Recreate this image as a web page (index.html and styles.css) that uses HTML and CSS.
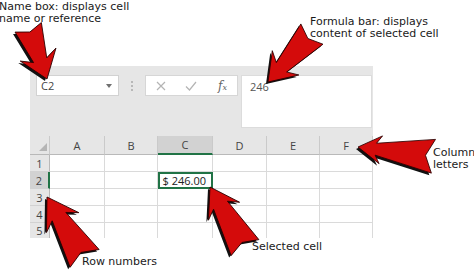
FILE: index.html
```html
<!DOCTYPE html>
<html>
<head>
<meta charset="utf-8">
<link rel="stylesheet" href="styles.css">
</head>
<body>
<div class="excel">
  <div class="toolbar">
    <div class="namebox"><span>C2</span><span class="caret"></span></div>
    <div class="sep"><i></i><i></i><i></i></div>
    <div class="fbtns">
      <span class="btn"><svg width="10" height="10" viewBox="0 0 10 10"><path d="M1 1L9 9M9 1L1 9" stroke="#b4b4b4" stroke-width="1.2" fill="none"/></svg></span>
      <span class="btn"><svg width="12" height="10" viewBox="0 0 12 10"><path d="M1 5.5L4.5 9L11 1" stroke="#b4b4b4" stroke-width="1.2" fill="none"/></svg></span>
      <span class="btn fx">f<span class="sub">x</span></span>
    </div>
    <div class="fbar">246</div>
  </div>
  <div class="grid">
    <div class="ch corner"><span class="tri"></span></div>
    <div class="ch">A</div><div class="ch">B</div><div class="ch on">C</div><div class="ch">D</div><div class="ch">E</div><div class="ch">F</div>

    <div class="rh">1</div>
    <div class="c"></div><div class="c"></div><div class="c"></div><div class="c"></div><div class="c"></div><div class="c"></div>

    <div class="rh on">2</div>
    <div class="c"></div><div class="c"></div><div class="c sel">$ 246.00</div><div class="c"></div><div class="c"></div><div class="c"></div>

    <div class="rh">3</div>
    <div class="c"></div><div class="c"></div><div class="c"></div><div class="c"></div><div class="c"></div><div class="c"></div>

    <div class="rh">4</div>
    <div class="c"></div><div class="c"></div><div class="c"></div><div class="c"></div><div class="c"></div><div class="c"></div>

    <div class="rh last">5</div>
    <div class="c last"></div><div class="c last"></div><div class="c last"></div><div class="c last"></div><div class="c last"></div><div class="c last"></div>
  </div>
</div>

<div class="note note-name">Name box: displays cell<br>name or reference</div>
<div class="note note-formula">Formula bar: displays<br>content of selected cell</div>
<div class="note note-col">Column<br>letters</div>
<div class="note note-row">Row numbers</div>
<div class="note note-sel">Selected cell</div>

<svg class="arrows" width="474" height="273" viewBox="0 0 474 273">
  <defs>
    <polygon id="a1" points="0,0 -26,-19 -20,-7 -55,-14 -50,0 -55,14 -20,7 -26,19"/>
    <polygon id="a2" points="0,0 -26,-18 -20,-7 -65,-15 -59,0 -65,15 -20,7 -26,18"/>
    <polygon id="a3" points="0,0 -23,-14 -18,-6 -76,-17 -68,0 -76,17 -18,6 -23,14"/>
    <polygon id="a4" points="0,0 -30,-19 -23,-8 -72,-17 -65,0 -72,17 -23,8 -30,19"/>
    <polygon id="a5" points="0,0 -28,-18 -21,-8 -70,-16 -64,0 -70,16 -21,8 -28,18"/>
  </defs>
  <g class="shadow" transform="translate(-2,2)">
    <use href="#a1" transform="translate(47,79) rotate(70)"/>
    <use href="#a2" transform="translate(268,82) rotate(132.5)"/>
    <use href="#a3" transform="translate(358,147) rotate(-173)"/>
    <use href="#a4" transform="translate(47,197) rotate(-121.5)"/>
    <use href="#a5" transform="translate(210,187) rotate(-120)"/>
  </g>
  <g class="red">
    <use href="#a1" transform="translate(47,79) rotate(70)"/>
    <use href="#a2" transform="translate(268,82) rotate(132.5)"/>
    <use href="#a3" transform="translate(358,147) rotate(-173)"/>
    <use href="#a4" transform="translate(47,197) rotate(-121.5)"/>
    <use href="#a5" transform="translate(210,187) rotate(-120)"/>
  </g>
</svg>
</body>
</html>
```

FILE: styles.css
```css
* { box-sizing: border-box; }
html, body { margin: 0; padding: 0; }
body {
  width: 474px;
  height: 273px;
  background: #fff;
  overflow: hidden;
  position: relative;
  padding: 66px 0 0 30px;
  font-family: "Open Sans", "Liberation Sans", sans-serif;
}
.excel {
  width: 343px;
  height: 172px;
  background: #e6e6e6;
  display: flex;
  flex-direction: column;
  overflow: hidden;
}
.toolbar {
  display: flex;
  align-items: flex-start;
  height: 70px;
  padding: 9px 1px 0 6px;
  flex: none;
}
.namebox {
  width: 83px;
  height: 21px;
  background: #fff;
  border: 1px solid #d2d2d2;
  display: flex;
  align-items: center;
  justify-content: space-between;
  padding: 0 4px 0 4px;
  font-size: 11px;
  color: #444;
}
.caret {
  width: 0;
  height: 0;
  border-left: 3.5px solid transparent;
  border-right: 3.5px solid transparent;
  border-top: 4px solid #707070;
  margin-right: 2px;
}
.sep {
  width: 26px;
  height: 21px;
  display: flex;
  flex-direction: column;
  align-items: center;
  justify-content: center;
  gap: 2px;
}
.sep i {
  display: block;
  width: 2px;
  height: 2px;
  background: #b8b8b8;
}
.fbtns {
  width: 93px;
  height: 21px;
  background: #fff;
  border: 1px solid #d6d6d6;
  display: flex;
  align-items: center;
}
.btn {
  width: 30px;
  height: 19px;
  display: flex;
  align-items: center;
  justify-content: center;
}
.fx {
  font-family: "DejaVu Serif", "Liberation Serif", serif;
  font-style: italic;
  font-size: 12px;
  color: #666;
  padding-left: 3px;
}
.fx .sub {
  font-size: 8px;
  position: relative;
  top: 2px;
}
.fbar {
  margin-left: 3px;
  width: 131px;
  height: 53px;
  background: #fff;
  border: 1px solid #dcdcdc;
  padding: 4px 8px;
  font-size: 11px;
  line-height: 14px;
  color: #555;
}
.grid {
  display: grid;
  grid-template-columns: 20px 55px 53px 55px 54px 53px 53px;
  grid-template-rows: 19px repeat(4, 17px) 15px;
  background: #fff;
  flex: none;
}
.c {
  border-right: 1px solid #dadada;
  border-bottom: 1px solid #dadada;
}
.ch {
  background: #e6e6e6;
  border-right: 1px solid #cacaca;
  border-bottom: 1px solid #b9b9b9;
  font-size: 11px;
  color: #444;
  display: flex;
  align-items: center;
  justify-content: center;
}
.corner {
  align-items: flex-end;
  justify-content: flex-end;
  padding: 0 2px 3px 0;
}
.tri {
  width: 8px;
  height: 8px;
  background: #b5b5b5;
  clip-path: polygon(100% 0, 100% 100%, 0 100%);
}
.rh {
  background: #e6e6e6;
  border-right: 1px solid #b9b9b9;
  border-bottom: 1px solid #d2d2d2;
  font-size: 11px;
  color: #444;
  display: flex;
  align-items: center;
  justify-content: center;
}
.ch.on {
  background: #d2d2d2;
  border-bottom: 2px solid #217346;
}
.rh.on {
  background: #d2d2d2;
  border-right: 2px solid #217346;
}
.sel {
  border: 2px solid #217346;
  display: flex;
  align-items: center;
  justify-content: flex-end;
  padding-right: 5px;
  font-size: 11px;
  color: #222;
}
.last { border-bottom: none; }

.note {
  position: absolute;
  font-family: "DejaVu Sans", Verdana, sans-serif;
  font-size: 11px;
  line-height: 12px;
  color: #1a1a1a;
  white-space: nowrap;
}
.note-name { left: -1px; top: 1px; }
.note-formula { left: 310px; top: 16px; }
.note-col { left: 433px; top: 147px; }
.note-row { left: 82px; top: 256px; }
.note-sel { left: 252px; top: 241px; }

.arrows {
  position: absolute;
  left: 0;
  top: 0;
}
.shadow use { fill: #111; }
.red use { fill: #d40b0b; stroke: #2a0000; stroke-width: 0.8; stroke-linejoin: round; }
```
